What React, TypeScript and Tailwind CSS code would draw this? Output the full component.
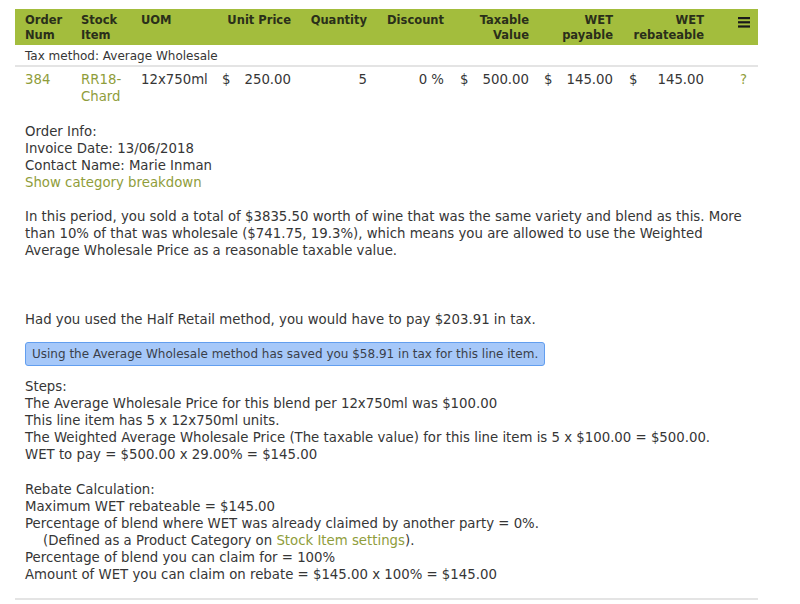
const LINK = "text-[#8f9d3b]";

function Hamburger() {
  return (
    <svg width="12" height="11" viewBox="0 0 12 11" className="inline-block">
      <rect x="0" y="0" width="12" height="2.2" fill="#1a1a1a" />
      <rect x="0" y="4.2" width="12" height="2.2" fill="#1a1a1a" />
      <rect x="0" y="8.4" width="12" height="2.2" fill="#1a1a1a" />
    </svg>
  );
}

function Money({ value, pl }: { value: string; pl: string }) {
  return (
    <div className={`flex justify-between pr-[5px] ${pl}`}>
      <span>$</span>
      <span>{value}</span>
    </div>
  );
}

const COLS = "grid grid-cols-[61px_60px_81px_79px_76px_77px_85px_84px_91px_49px]";

export default function App() {
  return (
    <div className="min-h-[604px] bg-white pt-[9px] pl-[15px] font-['DejaVu_Sans',Verdana,sans-serif] text-[#363636]">
      <div className="w-[743px]">
        {/* table header */}
        <div className={`${COLS} h-[36px] bg-[#a3bd3d] pt-[4px] text-[11.5px] font-bold leading-[15px] text-[#2a2f1a]`}>
          <div className="pl-[10px]">Order<br />Num</div>
          <div className="pl-[5px]">Stock<br />Item</div>
          <div className="pl-[5px]">UOM</div>
          <div className="pr-[5px] text-right">Unit Price</div>
          <div className="pr-[5px] text-right">Quantity</div>
          <div className="pr-[5px] text-right">Discount</div>
          <div className="pr-[5px] text-right">Taxable<br />Value</div>
          <div className="pr-[5px] text-right">WET<br />payable</div>
          <div className="pr-[5px] text-right">WET<br />rebateable</div>
          <div className="flex justify-end pr-[8px] pt-[4px]"><Hamburger /></div>
        </div>

        <div className="h-[22px] border-b-2 border-[#e4e4e4] pl-[10px] pt-[4px] text-[12px] leading-[15px]">
          Tax method: Average Wholesale
        </div>

        <div className={`${COLS} pt-[4px] text-[13.3px] leading-[17px]`}>
          <div className={`pl-[10px] ${LINK}`}>384</div>
          <div className={`pl-[5px] ${LINK}`}>RR18-<br />Chard</div>
          <div className="pl-[5px]">12x750ml</div>
          <Money value="250.00" pl="pl-[5px]" />
          <div className="pr-[5px] text-right">5</div>
          <div className="pr-[5px] text-right">0 %</div>
          <Money value="500.00" pl="pl-[11px]" />
          <Money value="145.00" pl="pl-[10px]" />
          <Money value="145.00" pl="pl-[11px]" />
          <div className={`pr-[11px] text-right ${LINK}`}>?</div>
        </div>

        {/* details */}
        <div className="px-[10px] pt-[18px] text-[13.3px] leading-[17px]">
          <div>
            <div>Order Info:</div>
            <div>Invoice Date: 13/06/2018</div>
            <div>Contact Name: Marie Inman</div>
            <div className={LINK}>Show category breakdown</div>
          </div>

          <p className="mt-[17px]">
            In this period, you sold a total of $3835.50 worth of wine that was the same variety and blend as this. More
            than 10% of that was wholesale ($741.75, 19.3%), which means you are allowed to use the Weighted
            Average Wholesale Price as a reasonable taxable value.
          </p>

          <p className="mt-[52px]">Had you used the Half Retail method, you would have to pay $203.91 in tax.</p>

          <div className="mt-[14px] inline-block rounded-[3px] border border-[#629eef] bg-[#a6c8f9] px-[6px] py-[4px] text-[12px] leading-[14px] text-[#3a3f4a]">
            Using the Average Wholesale method has saved you $58.91 in tax for this line item.
          </div>

          <div className="mt-[12px]">
            <div>Steps:</div>
            <div>The Average Wholesale Price for this blend per 12x750ml was $100.00</div>
            <div>This line item has 5 x 12x750ml units.</div>
            <div>The Weighted Average Wholesale Price (The taxable value) for this line item is 5 x $100.00 = $500.00.</div>
            <div>WET to pay = $500.00 x 29.00% = $145.00</div>
          </div>

          <div className="mt-[18px]">
            <div>Rebate Calculation:</div>
            <div>Maximum WET rebateable = $145.00</div>
            <div>Percentage of blend where WET was already claimed by another party = 0%.</div>
            <div className="pl-[18px]">
              (Defined as a Product Category on <span className={LINK}>Stock Item settings</span>).
            </div>
            <div>Percentage of blend you can claim for = 100%</div>
            <div>Amount of WET you can claim on rebate = $145.00 x 100% = $145.00</div>
          </div>
        </div>

        <div className="mt-[15px] border-b-2 border-[#e4e4e4]" />
      </div>
    </div>
  );
}
